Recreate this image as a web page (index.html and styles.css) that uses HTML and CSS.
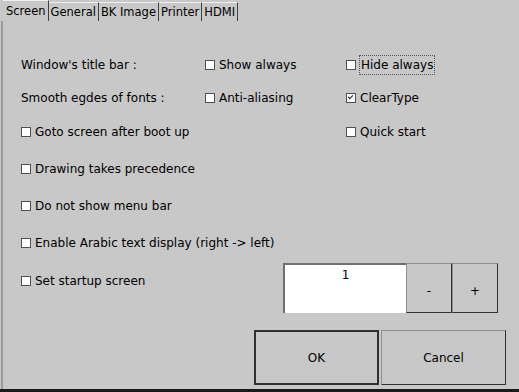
FILE: index.html
```html
<!DOCTYPE html>
<html lang="en">
<head>
    <meta charset="UTF-8">
    <title>Screen settings</title>
    <link rel="stylesheet" href="styles.css">
</head>
<body>
    <div class="window">
        <div class="tabs">
            <span class="tab active">Screen</span>
            <span class="tab">General</span>
            <span class="tab">BK Image</span>
            <span class="tab">Printer</span>
            <span class="tab">HDMI</span>
        </div>

        <div class="panel">
            <div class="row">
                <span class="label">Window's title bar :</span>
                <label class="check"><span class="box"></span>Show always</label>
                <label class="check"><span class="box"></span><span class="focus">Hide always</span></label>
            </div>
            <div class="row">
                <span class="label">Smooth egdes of fonts :</span>
                <label class="check"><span class="box"></span>Anti-aliasing</label>
                <label class="check"><span class="box checked"></span>ClearType</label>
            </div>
            <div class="row">
                <label class="check wide"><span class="box"></span>Goto screen after boot up</label>
                <label class="check"><span class="box"></span>Quick start</label>
            </div>
            <div class="row loose">
                <label class="check"><span class="box"></span>Drawing takes precedence</label>
            </div>
            <div class="row loose">
                <label class="check"><span class="box"></span>Do not show menu bar</label>
            </div>
            <div class="row loose">
                <label class="check"><span class="box"></span>Enable Arabic text display (right -&gt; left)</label>
            </div>

            <div class="startup">
                <label class="check"><span class="box"></span>Set startup screen</label>
                <div class="spinner">
                    <div class="value">1</div>
                    <button class="btn step">-</button>
                    <button class="btn step">+</button>
                </div>
            </div>

            <div class="actions">
                <button class="btn big ok">OK</button>
                <button class="btn big">Cancel</button>
            </div>
        </div>
    </div>
</body>
</html>
```

FILE: styles.css
```css
body {
    margin: 0;
    background-color: #c8c8c8;
    font-family: "DejaVu Sans", sans-serif;
    font-size: 12px;
    color: #000;
}
.window {
    width: 519px;
    height: 392px;
    display: flex;
    flex-direction: column;
    box-sizing: border-box;
    border-bottom: 3px solid #1a1a1a;
}
.tabs {
    display: flex;
    height: 21px;
    padding-left: 3px;
    align-items: flex-end;
    font-size: 11.5px;
}
.tab {
    height: 19px;
    line-height: 18px;
    padding: 0 2px;
    border-top: 1px solid #f0f0f0;
    border-right: 1px solid #404040;
    box-sizing: border-box;
    background-color: #c8c8c8;
}
.tab.active {
    height: 21px;
    line-height: 20px;
    padding: 0 2px 0 3px;
}
.panel {
    flex: 1;
    border-left: 2px solid #9a9a9a;
    margin-left: 1px;
    padding: 0 0 0 18px;
    display: flex;
    flex-direction: column;
}
.row {
    display: grid;
    grid-template-columns: 184px 141px auto;
    align-items: center;
    height: 20px;
    margin-top: 13px;
}
.row:first-child {
    margin-top: 34px;
}
.row:nth-child(3) {
    margin-top: 14px;
}
.row.loose {
    margin-top: 17px;
}
.row .wide {
    grid-column: 1 / span 2;
}
.label {
    display: block;
}
.check {
    display: flex;
    align-items: center;
    white-space: nowrap;
}
.box {
    width: 8px;
    height: 8px;
    border: 1px solid #505050;
    background-color: #fff;
    margin-right: 4px;
    position: relative;
    flex: none;
}
.box.checked::after {
    content: "";
    position: absolute;
    left: 2px;
    top: 0;
    width: 2px;
    height: 4px;
    border-right: 1.5px solid #222;
    border-bottom: 1.5px solid #222;
    transform: rotate(45deg);
}
.focus {
    outline: 1px dotted #555;
    padding: 2px 1px;
}
.startup {
    display: flex;
    align-items: flex-start;
    margin-top: 10px;
}
.startup .check {
    width: 262px;
    margin-top: 11px;
}
.spinner {
    display: flex;
    height: 50px;
}
.value {
    width: 123px;
    background-color: #fff;
    border-left: 2px solid #707070;
    border-top: 2px solid #707070;
    text-align: center;
    padding-top: 3px;
    box-sizing: border-box;
}
.btn {
    font: inherit;
    color: #000;
    background-color: #c8c8c8;
    border: 1px solid #303030;
    border-top-color: #909090;
    border-left-color: #909090;
    padding: 0;
    cursor: pointer;
}
.step {
    width: 46px;
    height: 50px;
    padding-top: 6px;
}
.actions {
    display: flex;
    gap: 2px;
    margin-top: 17px;
    margin-left: 233px;
}
.big {
    width: 125px;
    height: 55px;
}
.ok {
    border: 2px solid #303030;
}
```
